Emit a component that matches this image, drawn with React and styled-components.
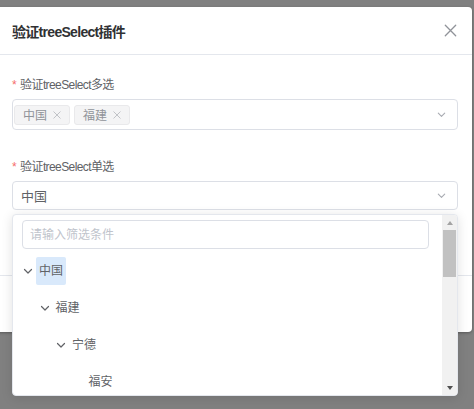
import React from "react";
import styled, { createGlobalStyle } from "styled-components";

const GlobalStyle = createGlobalStyle`
  html, body {
    margin: 0;
    padding: 0;
    background: #808080;
    overflow: hidden;
  }
  body {
    font-family: "Liberation Sans", "Noto Sans CJK SC", sans-serif;
    color: #606266;
  }
`;

function Chevron({ size = 10, color = "#909399" }) {
  return (
    <svg width={size} height={size} viewBox="0 0 12 12" fill="none">
      <path d="M2.5 4.5 L6 8 L9.5 4.5" stroke={color} strokeWidth="1.2" strokeLinecap="round" strokeLinejoin="round" />
    </svg>
  );
}

function Cross({ size = 8, color = "#909399", width = 1 }) {
  return (
    <svg width={size} height={size} viewBox="0 0 10 10" fill="none">
      <path d="M1 1 L9 9 M9 1 L1 9" stroke={color} strokeWidth={width} strokeLinecap="round" />
    </svg>
  );
}

export default function App() {
  return (
    <>
      <GlobalStyle />
      <Overlay>
        <Dialog>
          <Header>
            <Title>验证treeSelect插件</Title>
            <CloseBtn>
              <Cross size={13} color="#909399" width={1} />
            </CloseBtn>
          </Header>
          <Body>
            <FormItem>
              <Label>验证treeSelect多选</Label>
              <SelectBox $height={31}>
                <Tags>
                  <Tag>
                    中国
                    <Cross size={8} color="#b4b6bb" />
                  </Tag>
                  <Tag>
                    福建
                    <Cross size={8} color="#b4b6bb" />
                  </Tag>
                </Tags>
                <Chevron size={11} color="#a8abb2" />
              </SelectBox>
            </FormItem>
            <FormItem $top={27}>
              <Label>验证treeSelect单选</Label>
              <SelectWrap>
                <SelectBox $height={29}>
                  <Value>中国</Value>
                  <Chevron size={11} color="#a8abb2" />
                </SelectBox>
                <Dropdown>
                  <DropContent>
                    <Search placeholder="请输入筛选条件" />
                    <Tree>
                      <Node $level={0}>
                        <Arrow><Chevron size={12} color="#606266" /></Arrow>
                        <NodeLabel $active>中国</NodeLabel>
                      </Node>
                      <Node $level={1}>
                        <Arrow><Chevron size={12} color="#606266" /></Arrow>
                        <NodeLabel>福建</NodeLabel>
                      </Node>
                      <Node $level={2}>
                        <Arrow><Chevron size={12} color="#606266" /></Arrow>
                        <NodeLabel>宁德</NodeLabel>
                      </Node>
                      <Node $level={3}>
                        <Arrow />
                        <NodeLabel>福安</NodeLabel>
                      </Node>
                    </Tree>
                  </DropContent>
                  <Scrollbar>
                    <ScrollArrow $up />
                    <Thumb />
                    <Track />
                    <ScrollArrow />
                  </Scrollbar>
                </Dropdown>
              </SelectWrap>
            </FormItem>
          </Body>
          <Footer />
        </Dialog>
      </Overlay>
    </>
  );
}

const Overlay = styled.div`
  width: 474px;
  height: 409px;
  padding-top: 7px;
  box-sizing: border-box;
`;

const Dialog = styled.div`
  width: 484px;
  margin-left: -12px;
  background: #fff;
  border-radius: 4px;
  box-shadow: 0 1px 3px rgba(0, 0, 0, 0.3);
`;

const Header = styled.div`
  height: 47px;
  padding: 0 15px 0 24px;
  display: flex;
  align-items: center;
  justify-content: space-between;
  border-bottom: 1px solid #e4e7ed;
`;

const Title = styled.div`
  font-size: 14px;
  font-weight: 700;
  color: #303133;
  letter-spacing: -0.7px;
`;

const CloseBtn = styled.div`
  width: 14px;
  height: 14px;
  display: flex;
  align-items: center;
  justify-content: center;
`;

const Body = styled.div`
  padding: 20px 14px 0 24px;
  height: 221px;
  box-sizing: border-box;
  border-bottom: 1px solid #e4e7ed;
`;

const FormItem = styled.div`
  margin-top: ${(p) => p.$top || 0}px;
`;

const Label = styled.div`
  font-size: 12px;
  line-height: 20px;
  color: #606266;
  margin-bottom: 4px;
  letter-spacing: -0.6px;
  display: flex;
  align-items: center;
  &::before {
    content: "*";
    color: #f56c6c;
    margin-right: 4px;
    font-size: 12px;
  }
`;

const SelectWrap = styled.div`
  position: relative;
  margin-top: 2px;
`;

const SelectBox = styled.div`
  height: ${(p) => p.$height}px;
  box-sizing: border-box;
  border: 1px solid #dcdfe6;
  border-radius: 4px;
  display: flex;
  align-items: center;
  justify-content: space-between;
  padding: 0 10px 0 1px;
  background: #fff;
`;

const Tags = styled.div`
  display: flex;
  gap: 4px;
`;

const Tag = styled.span`
  height: 20px;
  box-sizing: border-box;
  padding: 0 8px;
  background: #f4f4f5;
  border: 1px solid #e9e9eb;
  border-radius: 3px;
  font-size: 12px;
  color: #909399;
  display: inline-flex;
  align-items: center;
  gap: 6px;
`;

const Value = styled.span`
  font-size: 13px;
  color: #606266;
  padding-left: 7px;
`;

const Dropdown = styled.div`
  position: absolute;
  top: calc(100% + 4px);
  left: 0;
  right: 0;
  height: 182px;
  box-sizing: border-box;
  background: #fff;
  border: 1px solid #e4e7ed;
  border-radius: 4px;
  box-shadow: 0 2px 12px rgba(0, 0, 0, 0.12);
  display: flex;
  overflow: hidden;
  z-index: 2;
`;

const DropContent = styled.div`
  flex: 1;
  padding: 5px 13px 0 9px;
  overflow: hidden;
`;

const Search = styled.input`
  width: 100%;
  height: 29px;
  box-sizing: border-box;
  border: 1px solid #dcdfe6;
  border-radius: 4px;
  padding: 0 7px;
  font-family: inherit;
  font-size: 12px;
  color: #606266;
  outline: none;
  &::placeholder {
    color: #c0c4cc;
  }
`;

const Tree = styled.div`
  margin-top: 3px;
`;

const Node = styled.div`
  height: 37px;
  display: flex;
  align-items: center;
  padding-left: ${(p) => p.$level * 16.5}px;
`;

const Arrow = styled.span`
  width: 12px;
  height: 12px;
  display: inline-flex;
  margin-right: 2px;
`;

const NodeLabel = styled.span`
  font-size: 12px;
  color: #606266;
  height: 28px;
  line-height: 28px;
  padding: 0 3px;
  border-radius: 2px;
  background: ${(p) => (p.$active ? "#d9e9fb" : "transparent")};
`;

const Scrollbar = styled.div`
  width: 15px;
  background: #f1f1f1;
  display: flex;
  flex-direction: column;
  align-items: center;
`;

const ScrollArrow = styled.div`
  height: 15px;
  width: 15px;
  display: flex;
  align-items: center;
  justify-content: center;
  &::after {
    content: "";
    border-left: 3.5px solid transparent;
    border-right: 3.5px solid transparent;
    ${(p) =>
      p.$up
        ? "border-bottom: 4px solid #a3a3a3;"
        : "border-top: 4px solid #505050;"}
  }
`;

const Thumb = styled.div`
  width: 13px;
  height: 47px;
  background: #c1c1c1;
`;

const Track = styled.div`
  flex: 1;
`;

const Footer = styled.div`
  height: 56px;
`;
